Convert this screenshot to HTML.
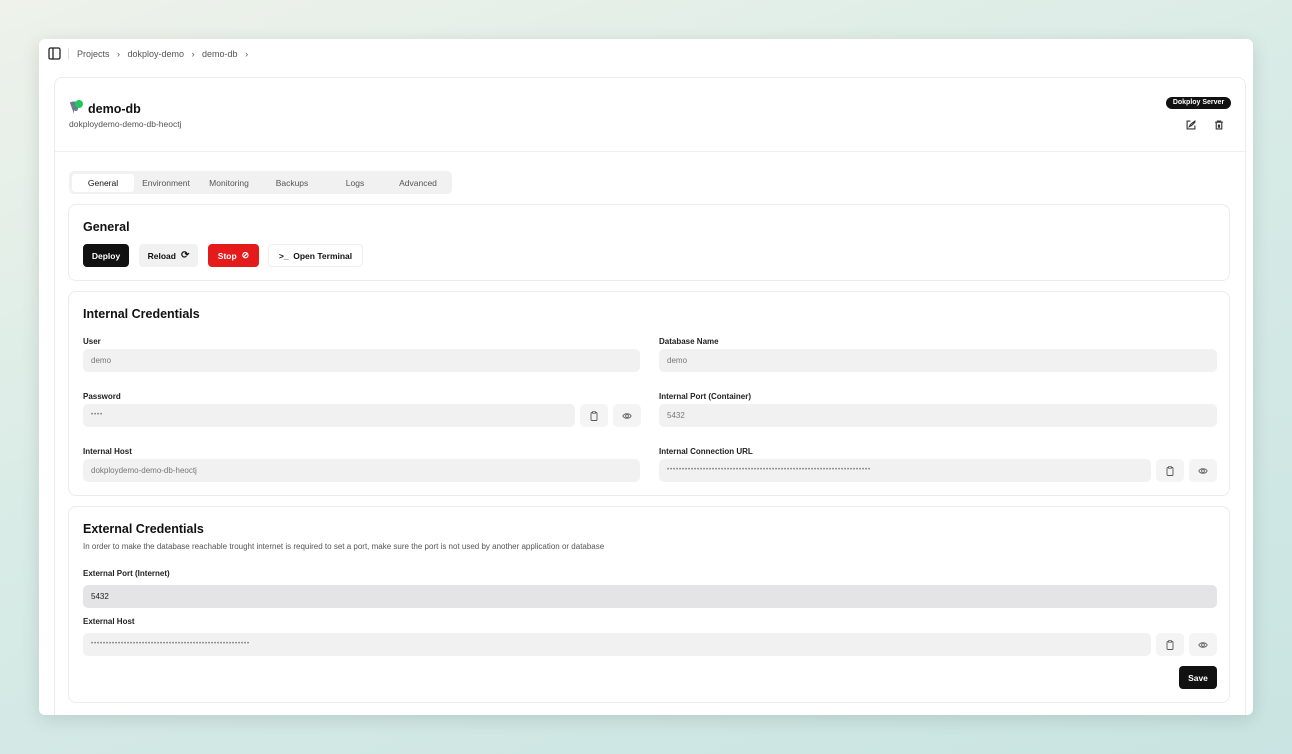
<!DOCTYPE html>
<html><head><meta charset="utf-8"><style>
*{box-sizing:border-box;margin:0;padding:0}
body{width:1292px;height:754px;overflow:hidden;font-family:"Liberation Sans",sans-serif;background:linear-gradient(160deg,#eef2ea 0%,#d8ebe6 45%,#c9e4e2 100%);position:relative;color:#111}
.win{position:absolute;left:39px;top:39px;width:1214px;height:676px;background:#fff;border-radius:6px;box-shadow:0 4px 18px rgba(0,0,0,.12);overflow:hidden}
.a{position:absolute}
.crumb{font-size:9px;color:#555}
.main{left:15px;top:38px;width:1192px;height:660px;border:1px solid #ececec;border-radius:8px}
.card{position:absolute;left:29px;width:1162px;border:1px solid #ececec;border-radius:8px;background:#fff}
.h{font-weight:bold;font-size:12.5px}
.lbl{position:absolute;font-size:8px;font-weight:bold;color:#222}
.inp{position:absolute;height:23px;background:#f1f1f2;border-radius:5px;font-size:8px;color:#777;padding-left:8px;line-height:23px}
.dots{font-size:6px;letter-spacing:0.9px;color:#777}
.ib{position:absolute;width:28px;height:23px;background:#f4f4f5;border-radius:5px;display:flex;align-items:center;justify-content:center}
.btn{position:absolute;height:23px;border-radius:4px;font-size:8.5px;font-weight:bold;display:flex;align-items:center;justify-content:center;gap:5px}
.tab{position:absolute;top:3px;height:18px;font-size:8.5px;color:#555;line-height:18px;text-align:center}
</style></head><body>
<svg width="0" height="0" style="position:absolute"><defs>
<symbol id="clip" viewBox="0 0 10 10"><rect x="2" y="1.5" width="6" height="8" rx="1" fill="none" stroke="#555" stroke-width="0.9"/><rect x="3.5" y="0.7" width="3" height="1.5" fill="#fff" stroke="#555" stroke-width="0.8"/></symbol>
<symbol id="eye" viewBox="0 0 10 10"><path d="M0.8 5C2.5 2 7.5 2 9.2 5 7.5 8 2.5 8 0.8 5z" fill="none" stroke="#666" stroke-width="0.9"/><circle cx="5" cy="5" r="1.4" fill="none" stroke="#666" stroke-width="0.9"/></symbol>
</defs></svg>
<div class="win">
 <svg class="a" style="left:9px;top:8px" width="13" height="13" viewBox="0 0 13 13"><rect x="1" y="1" width="11" height="11" rx="1.5" fill="none" stroke="#222" stroke-width="1.3"/><line x1="5" y1="1" x2="5" y2="12" stroke="#222" stroke-width="1.3"/></svg>
 <div class="a" style="left:29px;top:9px;width:1px;height:11px;background:#ddd"></div>
 <div class="a crumb" style="left:38px;top:10px">Projects &nbsp;&nbsp;›&nbsp;&nbsp; dokploy-demo &nbsp;&nbsp;›&nbsp;&nbsp; demo-db &nbsp;&nbsp;›</div>
 <div class="a main">
  <svg class="a" style="left:14px;top:22px" width="18" height="14" viewBox="0 0 18 14"><path d="M1 3c0-2 7-2 8 0v6c0 2-3 3-4 1v4" fill="#6b7c8c"/><circle cx="10" cy="4" r="4" fill="#22c55e"/></svg>
  <div class="a" style="left:33px;top:24px;font-size:12.5px;font-weight:bold">demo-db</div>
  <div class="a" style="left:14px;top:41px;font-size:8.5px;color:#555">dokploydemo-demo-db-heoctj</div>
  <div class="a" style="left:1111px;top:19px;width:65px;height:12px;background:#111;color:#fff;border-radius:7px;font-size:7px;font-weight:bold;text-align:center;line-height:12px">Dokploy Server</div>
  <svg class="a" style="left:1131px;top:42px" width="10" height="10" viewBox="0 0 9 9"><path d="M4 1H1v7h7V5M3 6l1-2 4-3 0 1-3 3z" fill="none" stroke="#333" stroke-width="1"/></svg>
  <svg class="a" style="left:1159px;top:42px" width="10" height="10" viewBox="0 0 9 9"><path d="M1 2h7M3 2V1h3v1M2 2v6h5V2M4 4v3M5 4v3" fill="none" stroke="#333" stroke-width="1"/></svg>
  <div class="a" style="left:0;top:73px;width:1192px;height:1px;background:#eee"></div>
  <div class="a" style="left:14px;top:93px;width:383px;height:23px;background:#f1f1f2;border-radius:5px">
   <div class="tab" style="left:3px;width:62px;background:#fff;border-radius:3px;color:#111">General</div>
   <div class="tab" style="left:66px;width:62px">Environment</div>
   <div class="tab" style="left:129px;width:62px">Monitoring</div>
   <div class="tab" style="left:192px;width:62px">Backups</div>
   <div class="tab" style="left:255px;width:62px">Logs</div>
   <div class="tab" style="left:318px;width:62px">Advanced</div>
  </div>
 </div>
 <div class="card" style="top:165px;height:77px">
  <div class="a h" style="left:14px;top:15px">General</div>
  <div class="btn" style="left:14px;top:39px;width:46px;background:#111;color:#fff">Deploy</div>
  <div class="btn" style="left:70px;top:39px;width:59px;background:#f1f1f2">Reload <span style="font-size:10px">⟳</span></div>
  <div class="btn" style="left:139px;top:39px;width:51px;background:#e51b1b;color:#fff">Stop <span style="font-size:9px">⊘</span></div>
  <div class="btn" style="left:199px;top:39px;width:95px;border:1px solid #eee;background:#fff">&gt;_ &nbsp;Open Terminal</div>
 </div>
 <div class="card" style="top:252px;height:205px">
  <div class="a h" style="left:14px;top:15px">Internal Credentials</div>
  <div class="lbl" style="left:14px;top:45px">User</div>
  <div class="inp" style="left:14px;top:57px;width:557px">demo</div>
  <div class="lbl" style="left:590px;top:45px">Database Name</div>
  <div class="inp" style="left:590px;top:57px;width:558px">demo</div>
  <div class="lbl" style="left:14px;top:100px">Password</div>
  <div class="inp dots" style="left:14px;top:112px;width:492px">••••</div>
  <div class="ib" style="left:511px;top:112px"><svg width="10" height="10"><use href="#clip"/></svg></div><div class="ib" style="left:544px;top:112px"><svg width="10" height="10"><use href="#eye"/></svg></div>
  <div class="lbl" style="left:590px;top:100px">Internal Port (Container)</div>
  <div class="inp" style="left:590px;top:112px;width:558px">5432</div>
  <div class="lbl" style="left:14px;top:155px">Internal Host</div>
  <div class="inp" style="left:14px;top:167px;width:557px">dokploydemo-demo-db-heoctj</div>
  <div class="lbl" style="left:590px;top:155px">Internal Connection URL</div>
  <div class="inp dots" style="left:590px;top:167px;width:492px">••••••••••••••••••••••••••••••••••••••••••••••••••••••••••••••••••••</div>
  <div class="ib" style="left:1087px;top:167px"><svg width="10" height="10"><use href="#clip"/></svg></div><div class="ib" style="left:1120px;top:167px"><svg width="10" height="10"><use href="#eye"/></svg></div>
 </div>
 <div class="card" style="top:467px;height:197px">
  <div class="a h" style="left:14px;top:15px">External Credentials</div>
  <div class="a" style="left:14px;top:35px;font-size:8px;color:#555">In order to make the database reachable trought internet is required to set a port, make sure the port is not used by another application or database</div>
  <div class="lbl" style="left:14px;top:62px">External Port (Internet)</div>
  <div class="inp" style="left:14px;top:78px;width:1134px;background:#e4e4e7;color:#222">5432</div>
  <div class="lbl" style="left:14px;top:110px">External Host</div>
  <div class="inp dots" style="left:14px;top:126px;width:1068px">•••••••••••••••••••••••••••••••••••••••••••••••••••••</div>
  <div class="ib" style="left:1087px;top:126px"><svg width="10" height="10"><use href="#clip"/></svg></div><div class="ib" style="left:1120px;top:126px"><svg width="10" height="10"><use href="#eye"/></svg></div>
  <div class="btn" style="left:1110px;top:159px;width:38px;background:#111;color:#fff">Save</div>
 </div>
</div>
</body></html>
